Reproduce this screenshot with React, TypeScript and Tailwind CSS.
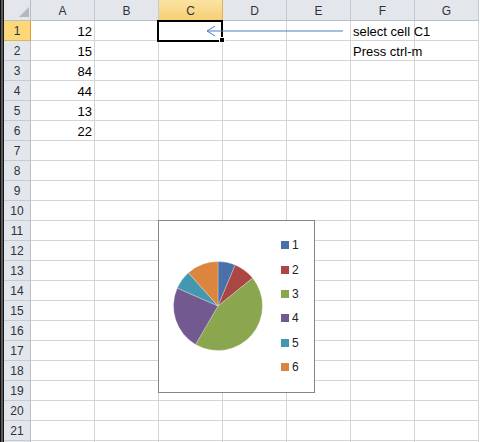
import React from "react";

const COLS = ["A", "B", "C", "D", "E", "F", "G"];
const ROWS = Array.from({ length: 22 }, (_, i) => i + 1);

const values: Record<number, string> = { 1: "12", 2: "15", 3: "84", 4: "44", 5: "13", 6: "22" };
const notes: Record<number, string> = { 1: "select cell C1", 2: "Press ctrl-m" };

const pie = [
  { label: "1", v: 12, color: "#4a70a8" },
  { label: "2", v: 15, color: "#aa4744" },
  { label: "3", v: 84, color: "#8aa64f" },
  { label: "4", v: 44, color: "#72598f" },
  { label: "5", v: 13, color: "#4398af" },
  { label: "6", v: 22, color: "#dc853f" },
];

const font = { fontFamily: '"Liberation Sans", Arial, sans-serif' };

function slices(cx: number, cy: number, r: number) {
  const total = pie.reduce((s, p) => s + p.v, 0);
  let a = -Math.PI / 2;
  return pie.map((p) => {
    const sweep = (p.v / total) * Math.PI * 2;
    const x1 = cx + r * Math.cos(a);
    const y1 = cy + r * Math.sin(a);
    const x2 = cx + r * Math.cos(a + sweep);
    const y2 = cy + r * Math.sin(a + sweep);
    const large = sweep > Math.PI ? 1 : 0;
    a += sweep;
    return {
      ...p,
      d: `M${cx},${cy} L${x1.toFixed(2)},${y1.toFixed(2)} A${r},${r} 0 ${large} 1 ${x2.toFixed(2)},${y2.toFixed(2)} Z`,
    };
  });
}

function PieChart() {
  return (
    <div className="absolute left-[158px] top-[220px] flex h-[173px] w-[157px] border border-[#868686] bg-white">
      <svg width="92" height="92" viewBox="0 0 92 92" className="ml-[13px] mt-[39px]">
        {slices(46, 46, 44.5).map((s) => (
          <path key={s.label} d={s.d} fill={s.color} stroke="#ffffff" strokeOpacity={0.45} strokeWidth={0.6} />
        ))}
      </svg>
      <div className="ml-[17px] flex flex-col pt-[12px]">
        {pie.map((p) => (
          <div key={p.label} className="flex h-[24.4px] items-center gap-[3px]">
            <span className="h-[8px] w-[8px]" style={{ backgroundColor: p.color }} />
            <span className="text-[12px] leading-none text-[#222]" style={font}>
              {p.label}
            </span>
          </div>
        ))}
      </div>
    </div>
  );
}

export default function App() {
  return (
    <div className="relative flex h-[442px] w-[480px] overflow-hidden bg-white" style={font}>
      {/* window edge */}
      <div className="flex h-full w-[4px]">
        <div className="w-[1px] bg-[#0e0e0e]" />
        <div className="w-[2px] bg-[#5a5a5a]" />
        <div className="w-[1px] bg-[#161616]" />
      </div>

      <div className="flex flex-col">
        {/* column header */}
        <div className="flex h-[21px] shrink-0">
          <div className="relative h-full w-[27px] border-r border-b border-[#b9bec5] bg-[#e3e7ec]">
            <svg width="27" height="20" className="absolute left-0 top-0">
              <polygon points="15,17 25,17 25,7" fill="#b4b8bd" />
            </svg>
          </div>
          {COLS.map((c) =>
            c === "C" ? (
              <div
                key={c}
                className="flex h-full w-[64px] items-end justify-center border-r border-b border-r-[#e0b25a] border-b-[#e29b2c] bg-gradient-to-b from-[#fbe3a2] to-[#f7cf73] pb-[2px] text-[12px] leading-[14px] text-[#2b3340]"
              >
                {c}
              </div>
            ) : (
              <div
                key={c}
                className="flex h-full w-[64px] items-end justify-center border-r border-b border-r-[#c6cbd1] border-b-[#b9bec5] bg-[#e3e7ec] pb-[2px] text-[12px] leading-[14px] text-[#2b3340]"
              >
                {c}
              </div>
            ),
          )}
        </div>

        {ROWS.map((r) => (
          <div key={r} className="flex h-[20px] shrink-0">
            {r === 1 ? (
              <div className="flex h-full w-[27px] items-center justify-center border-r border-b border-r-[#e29b2c] border-b-[#e0b25a] bg-[#fcd87a] text-[12px] text-[#2b3340]">
                {r}
              </div>
            ) : (
              <div className="flex h-full w-[27px] items-center justify-center border-r border-b border-r-[#b9bec5] border-b-[#c6cbd1] bg-[#e3e7ec] text-[12px] text-[#2b3340]">
                {r < 22 ? r : ""}
              </div>
            )}
            {COLS.map((c) => (
              <div
                key={c}
                className={
                  c === "A"
                    ? "flex h-full w-[64px] items-end justify-end border-r border-b border-[#d4d4d4] pr-[2px] pb-[1px] text-[13px] leading-[15px] text-black"
                    : "flex h-full w-[64px] items-end border-r border-b border-[#d4d4d4] pl-[2px] pb-[1px] text-[13px] leading-[15px] whitespace-nowrap text-black"
                }
              >
                {c === "A" ? values[r] ?? "" : c === "F" ? notes[r] ?? "" : ""}
              </div>
            ))}
          </div>
        ))}
      </div>

      {/* active cell C1 */}
      <div className="absolute left-[157px] top-[20px] h-[22px] w-[66px] border-2 border-black" />
      <div className="absolute left-[219px] top-[37px] h-[6px] w-[6px] border border-white bg-black" />

      {/* arrow pointing to C1 */}
      <svg className="absolute left-[200px] top-[22px]" width="150" height="18" viewBox="0 0 150 18">
        <line x1="7" y1="9" x2="143" y2="9" stroke="#4a7ebb" strokeWidth="1" />
        <polyline points="15,4 7,9 15,14" fill="none" stroke="#4a7ebb" strokeWidth="1" />
      </svg>

      <PieChart />
    </div>
  );
}
